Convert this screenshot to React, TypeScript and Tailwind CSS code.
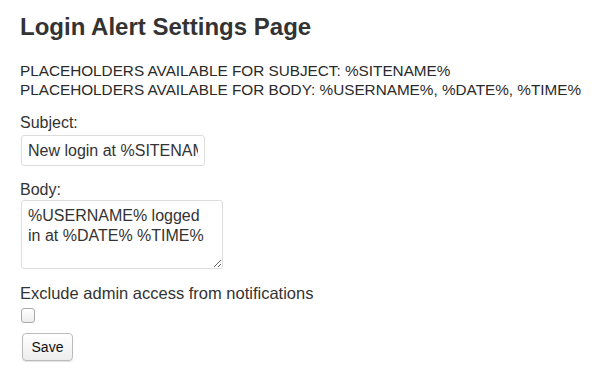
import React, { useState } from 'react';

export default function App() {
  const [subject, setSubject] = useState('New login at %SITENAME%');
  const [body, setBody] = useState('%USERNAME% logged in at %DATE% %TIME%');
  const [exclude, setExclude] = useState(false);

  return (
    <div className="w-[600px] h-[391px] overflow-hidden bg-white px-[20px] pt-[13px] text-[#333] font-['Liberation_Sans',Arial,sans-serif]">
      <h1 className="text-[24px] font-bold leading-[28px] text-[#333]">Login Alert Settings Page</h1>

      <div className="mt-[20px] text-[15.3px] leading-[19px] text-[#2a2a2a] whitespace-nowrap">
        <p>PLACEHOLDERS AVAILABLE FOR SUBJECT: %SITENAME%</p>
        <p>PLACEHOLDERS AVAILABLE FOR BODY: %USERNAME%, %DATE%, %TIME%</p>
      </div>

      <form className="mt-[14px] flex flex-col items-start text-[16px] text-[#333]" onSubmit={e => e.preventDefault()}>
        <label className="leading-[20px]">Subject:</label>
        <input
          className="mt-[2px] ml-[1px] w-[184px] h-[31px] px-[6px] border border-[#ddd] rounded-[3px] text-[16px] text-[#333] outline-none"
          value={subject}
          onChange={e => setSubject(e.target.value)}
        />

        <label className="mt-[14px] leading-[20px]">Body:</label>
        <textarea
          className="ml-[1px] w-[202px] h-[69px] pl-[6px] pr-[16px] py-[5px] border border-[#ddd] rounded-[3px] text-[16px] leading-[20px] text-[#333] outline-none"
          value={body}
          onChange={e => setBody(e.target.value)}
        />

        <label className="mt-[14px] leading-[20px] text-[16.5px]">Exclude admin access from notifications</label>
        <input
          type="checkbox"
          className="mt-[5px] ml-[1px] w-[14px] h-[15px] appearance-none border border-[#aaa] rounded-[3px] bg-gradient-to-b from-white to-[#ececec] checked:bg-[#3b82f6]"
          checked={exclude}
          onChange={e => setExclude(e.target.checked)}
        />

        <button
          type="submit"
          className="mt-[10px] ml-[2px] w-[51px] h-[28px] border border-[#bbb] rounded-[4px] bg-gradient-to-b from-white to-[#ededed] text-[14px] text-[#111] shadow-[0_1px_1px_rgba(0,0,0,0.12)]"
        >
          Save
        </button>
      </form>
    </div>
  );
}
